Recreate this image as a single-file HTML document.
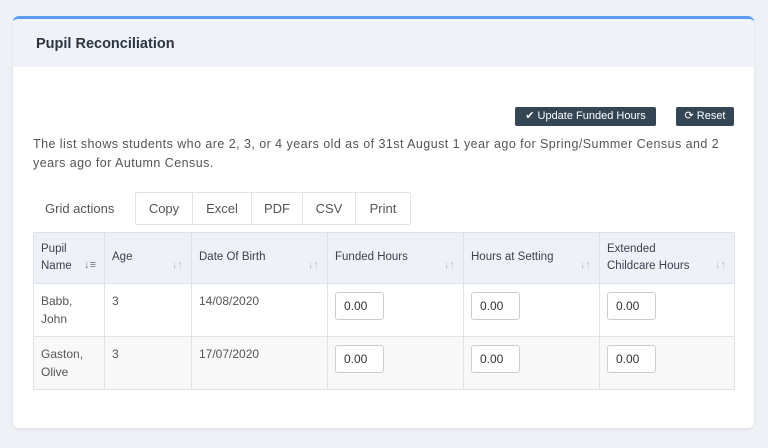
<!DOCTYPE html>
<html><head><style>
body{margin:0;width:768px;height:448px;background:#eef1f6;font-family:"Liberation Sans",sans-serif;position:relative;overflow:hidden;color:#555}
.card{position:absolute;left:13px;top:16px;width:741px;height:409px;background:#fff;border-radius:6px;border-top:3px solid #5b9cf2;box-shadow:0 1px 3px rgba(0,0,0,.08);overflow:hidden}
.hd{height:48px;background:#eff3f9;font-weight:bold;font-size:14.5px;color:#2d3440;padding-left:23px;line-height:50px}
.btn{position:absolute;top:88px;height:19px;background:#344656;color:#fff;font-size:11px;border-radius:2px;line-height:19px;text-align:center}
.txt{position:absolute;left:20px;top:116px;width:705px;font-size:12.5px;letter-spacing:0.45px;line-height:19px;color:#555}
.ga{position:absolute;left:32px;top:182px;font-size:13px;color:#555}
.tabs{position:absolute;left:122px;top:173px;height:31px;display:flex;border:1px solid #e3e3e3;border-radius:2px}
.tabs div{border-left:1px solid #e3e3e3;font-size:13px;line-height:31px;text-align:center;color:#555}
.tabs div:first-child{border-left:none}
table{position:absolute;left:20px;top:213px;border-collapse:collapse;font-size:12px}
td,th{border:1px solid #dfe2e6;vertical-align:top;text-align:left;padding:8px 7px;color:#555;font-weight:normal;position:relative}
th{background:#eef2f8;color:#3a4150;height:33px;padding:8px 7px;font-size:11.5px;line-height:17px}
th .s{position:absolute;right:8px;bottom:9px;color:#bbb;font-size:11px}
td{height:36px;line-height:18px}
tr.a td{background:#fff} tr.b td{background:#f8f8f8}
.in{border:1px solid #ccc;border-radius:3px;background:#fff;line-height:26px;padding-left:8px;box-sizing:border-box;width:49px;height:28px;color:#333}
</style></head><body>
<div class="card">
<div class="hd">Pupil Reconciliation</div>
<div class="btn" style="left:502px;width:141px">✔ Update Funded Hours</div>
<div class="btn" style="left:663px;width:58px">⟳ Reset</div>
<div class="txt">The list shows students who are 2, 3, or 4 years old as of 31st August 1 year ago for Spring/Summer Census and 2 years ago for Autumn Census.</div>
<div class="ga">Grid actions</div>
<div class="tabs"><div style="width:56px">Copy</div><div style="width:58px">Excel</div><div style="width:50px">PDF</div><div style="width:52px">CSV</div><div style="width:54px">Print</div></div>
<table>
<tr><th style="width:56px">Pupil<br>Name<span class="s" style="color:#777">↓≡</span></th><th style="width:72px;padding-top:16px;height:25px">Age<span class="s">↓↑</span></th><th style="width:121px;padding-top:16px;height:25px">Date Of Birth<span class="s">↓↑</span></th><th style="width:121px;padding-top:16px;height:25px">Funded Hours<span class="s">↓↑</span></th><th style="width:121px;padding-top:16px;height:25px">Hours at Setting<span class="s">↓↑</span></th><th style="width:120px">Extended<br>Childcare Hours<span class="s">↓↑</span></th></tr>
<tr class="a"><td>Babb,<br>John</td><td>3</td><td>14/08/2020</td><td><div class="in">0.00</div></td><td><div class="in">0.00</div></td><td><div class="in">0.00</div></td></tr>
<tr class="b"><td>Gaston,<br>Olive</td><td>3</td><td>17/07/2020</td><td><div class="in">0.00</div></td><td><div class="in">0.00</div></td><td><div class="in">0.00</div></td></tr>
</table>
</div>
</body></html>
